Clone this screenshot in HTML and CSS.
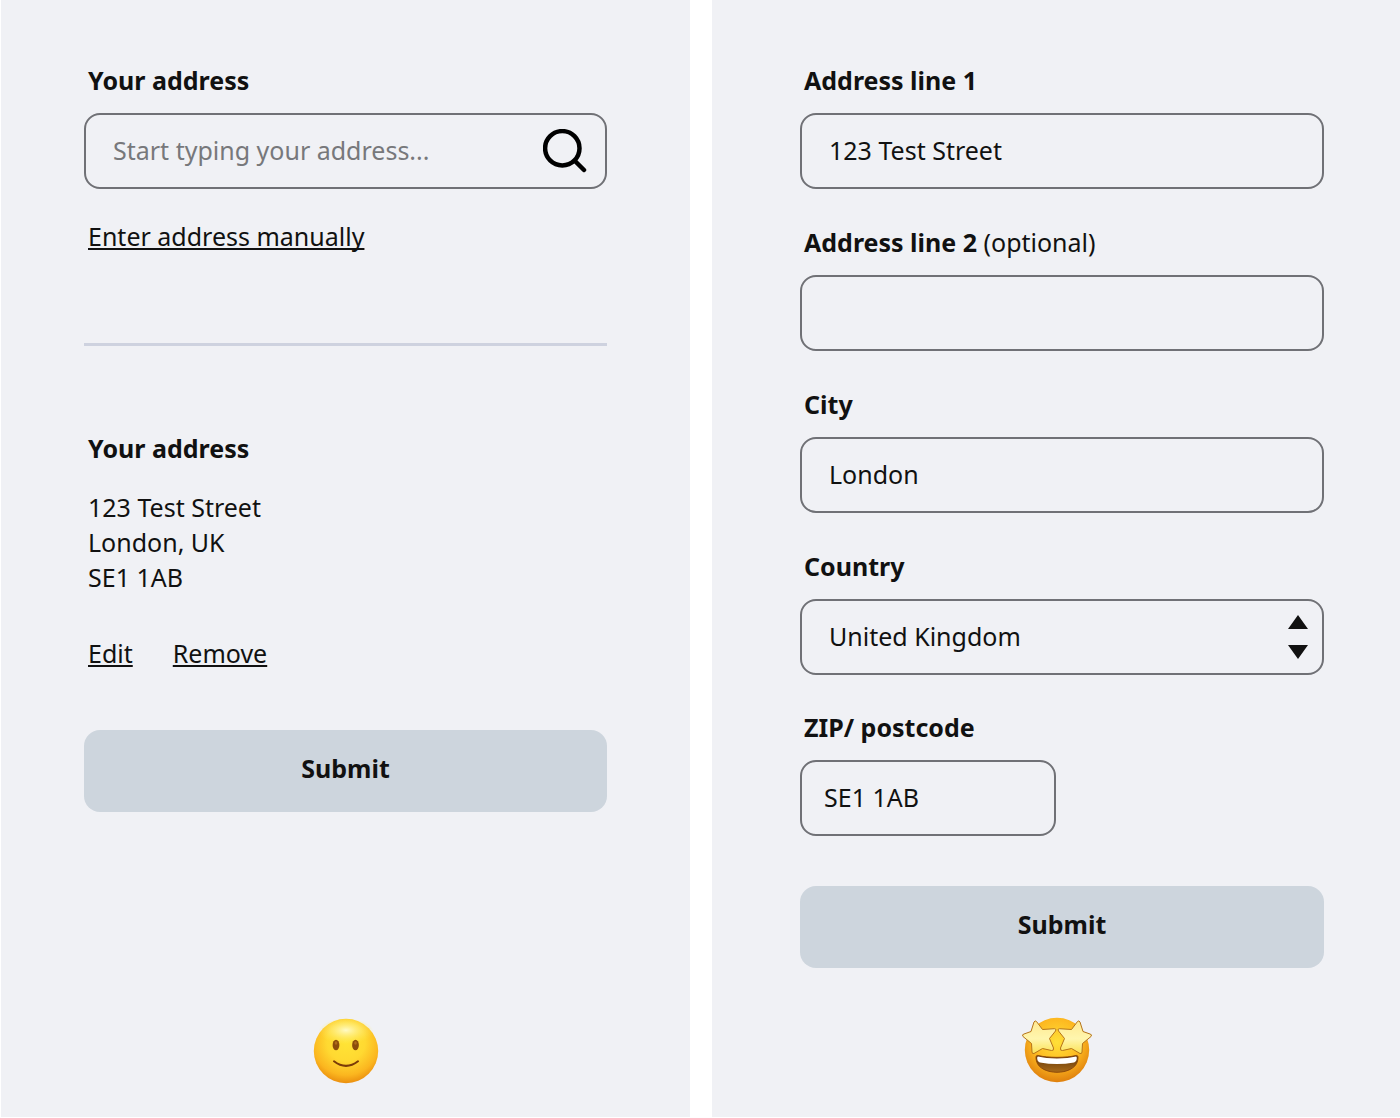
FILE: index.html
```html
<!DOCTYPE html>
<html lang="en">
<head>
<meta charset="utf-8">
<meta name="viewport" content="width=device-width, initial-scale=1">
<title>Your address</title>
<link rel="stylesheet" href="styles.css">
</head>
<body>
<main class="comparison">
  <section class="panel">
    <form class="form">
      <label class="label" for="search">Your address</label>
      <div class="control">
        <input class="input input-search" id="search" type="text" placeholder="Start typing your address...">
        <button class="search-button" type="button" aria-label="Search">
          <svg viewBox="0 0 44 44" width="44" height="44" fill="none" stroke="#000" stroke-width="4.5" stroke-linecap="round" aria-hidden="true">
            <circle cx="19.300" cy="19.300" r="17.200"/>
            <path d="M32 32 41 41"/>
          </svg>
        </button>
      </div>
      <a class="link manual" href="#manual">Enter address manually</a>
      <hr class="divider">
      <h2 class="label">Your address</h2>
      <address class="address">123 Test Street<br>London, UK<br>SE1 1AB</address>
      <div class="actions">
        <a class="link" href="#edit">Edit</a>
        <a class="link" href="#remove">Remove</a>
      </div>
      <button class="submit" type="button">Submit</button>
    </form>
    <svg class="emoji" viewBox="0 0 72 66" width="72" height="66" role="img" aria-label="Slightly smiling face">
      <defs>
        <radialGradient id="smile-face" cx=".5" cy=".36" r=".66">
          <stop offset="0" stop-color="#ffe436"/>
          <stop offset=".45" stop-color="#ffd931"/>
          <stop offset=".78" stop-color="#fbb61f"/>
          <stop offset="1" stop-color="#e8890c"/>
        </radialGradient>
        <radialGradient id="smile-shine" cx=".5" cy=".4" r=".5">
          <stop offset="0" stop-color="#fffccf" stop-opacity=".95"/>
          <stop offset="1" stop-color="#ffed60" stop-opacity="0"/>
        </radialGradient>
      </defs>
      <circle cx="36" cy="33" r="32.200" fill="url(#smile-face)"/>
      <ellipse cx="36" cy="15" rx="28" ry="14" fill="url(#smile-shine)"/>
      <ellipse cx="26" cy="27" rx="3.400" ry="5.300" fill="#8b4d0b"/>
      <ellipse cx="45.500" cy="27" rx="3.400" ry="5.300" fill="#8b4d0b"/>
      <ellipse cx="26" cy="25" rx="1.300" ry="1.700" fill="#ad6b1b"/>
      <ellipse cx="45.500" cy="25" rx="1.300" ry="1.700" fill="#ad6b1b"/>
      <path d="M24 43.300Q36 52.500 48 43.300" fill="none" stroke="#7b3b08" stroke-width="2" stroke-linecap="round"/>
    </svg>
  </section>

  <section class="panel panel-manual">
    <form class="form">
      <label class="label" for="line1">Address line 1</label>
      <input class="input" id="line1" type="text" value="123 Test Street">
      <label class="label" for="line2">Address line 2 <span class="optional">(optional)</span></label>
      <input class="input" id="line2" type="text">
      <label class="label" for="city">City</label>
      <input class="input" id="city" type="text" value="London">
      <label class="label" for="country">Country</label>
      <div class="control">
        <select class="input" id="country"><option>United Kingdom</option></select>
        <svg class="arrows" viewBox="0 0 20 44" width="20" height="44" fill="#111" aria-hidden="true">
          <path d="M10 0 20 14H0ZM0 30H20L10 44Z"/>
        </svg>
      </div>
      <label class="label" for="postcode">ZIP/ postcode</label>
      <input class="input input-short" id="postcode" type="text" value="SE1 1AB">
      <button class="submit" type="button">Submit</button>
    </form>
    <svg class="emoji" viewBox="0 0 74 66" width="74" height="66" role="img" aria-label="Star-struck face">
      <defs>
        <radialGradient id="star-face" cx=".5" cy=".38" r=".62">
          <stop offset="0" stop-color="#ffe038"/>
          <stop offset=".6" stop-color="#fdb820"/>
          <stop offset="1" stop-color="#df800d"/>
        </radialGradient>
        <linearGradient id="star-fill" x1="0" y1="0" x2="0" y2="1">
          <stop offset="0" stop-color="#ffe991"/>
          <stop offset=".55" stop-color="#fff6ae"/>
          <stop offset="1" stop-color="#fbe254"/>
        </linearGradient>
        <linearGradient id="mouth" x1="0" y1="0" x2="0" y2="1">
          <stop offset="0" stop-color="#623607"/>
          <stop offset="1" stop-color="#a86a19"/>
        </linearGradient>
        <path id="star" d="M14 5Q15 3 16.500 4.500L22.500 12.500 34.500 11.700Q37 12 35.500 14L29.500 21.500 33.500 31Q34 34 31.500 33.500L22.500 31.500 14 36.500Q12 37 12 35L11.500 26.500 3 19.500Q1.500 17.500 4 17L11 14.500Z"/>
      </defs>
      <circle cx="37" cy="33" r="32.200" fill="url(#star-face)"/>
      <path d="M18 38.500C28 41 46 41 56 38.500C58 38 58.500 40 57.500 44C54 59 20 59 16.500 44C15.500 40 16 38 18 38.500Z" fill="url(#mouth)" stroke="#8a470a"/>
      <path d="M18 39.500C28 42 46 42 56 39.500C57.500 39.500 57 45 54 45.500Q37 48.500 20 45.500C17 45 16.500 39.500 18 39.500Z" fill="#fff"/>
      <g stroke="#b5741a" stroke-linejoin="round" fill="url(#star-fill)">
        <use href="#star"/>
        <use href="#star" transform="translate(74 0) scale(-1 1)"/>
      </g>
    </svg>
  </section>
</main>
</body>
</html>
```
FILE: styles.css
```css
* {
  box-sizing: border-box;
}

body {
  margin: 0;
  background: #fff;
  color: #111;
  font: 25px/34px "Noto Sans", sans-serif;
}

.comparison {
  display: grid;
  grid-template-columns: minmax(0, 689fr) minmax(0, 688fr);
  gap: 22px;
  padding: 0 0 1px 1px;
}

.panel {
  display: flex;
  flex-direction: column;
  padding: 63px 83px 33px;
  background: #f0f1f5;
}

.panel-manual {
  padding: 63px 76px 34px 77px;
}

.form {
  display: flex;
  flex-direction: column;
}

.panel-manual .form {
  padding-left: 11px;
}

.label {
  margin: 0 4px 16px;
  font-size: 25px;
  font-weight: 700;
}

.optional {
  font-weight: 400;
}

.control {
  display: grid;
  align-items: center;
}

.control > * {
  grid-area: 1 / 1;
}

.input {
  width: 100%;
  height: 76px;
  margin: 0;
  padding: 0 27px 2px;
  border: 2px solid #707176;
  border-radius: 16px;
  background: transparent;
  color: inherit;
  font: inherit;
  appearance: none;
}

.input::placeholder {
  color: #77787b;
  opacity: 1;
}

.input-search {
  padding-right: 76px;
}

.input-short {
  width: 256px;
  padding: 0 22px 2px;
}

.input + .label {
  margin-top: 36px;
}

.control + .label {
  margin-top: 35px;
}

.search-button {
  display: flex;
  justify-self: end;
  margin-right: 20px;
  padding: 0;
  border: 0;
  background: none;
}

.arrows {
  justify-self: end;
  margin-right: 16px;
  pointer-events: none;
}

.link {
  color: inherit;
  text-decoration-skip-ink: none;
  text-decoration-thickness: 2px;
  text-underline-offset: 2px;
}

.manual {
  align-self: flex-start;
  margin: 30px 4px 0;
}

.divider {
  width: 100%;
  height: 3px;
  margin: 90px 0 85px;
  border: 0;
  background: #ced2df;
}

.address {
  margin: 9px 4px 0;
  font-style: normal;
  line-height: 35px;
}

.actions {
  display: flex;
  gap: 40px;
  margin: 41px 4px 0;
}

.submit {
  width: 100%;
  height: 82px;
  margin-top: 60px;
  padding: 0 0 6px;
  border: 0;
  border-radius: 16px;
  background: #cdd5dd;
  color: inherit;
  font: inherit;
  font-weight: 700;
}

.input-short + .submit {
  margin-top: 50px;
}

.emoji {
  display: block;
  align-self: center;
  margin-top: auto;
}

.panel-manual .emoji {
  margin-top: 49px;
}

@media (max-width: 800px) {
  .comparison {
    grid-template-columns: minmax(0, 1fr);
  }

  .panel {
    padding: 40px 24px;
  }
}
```
